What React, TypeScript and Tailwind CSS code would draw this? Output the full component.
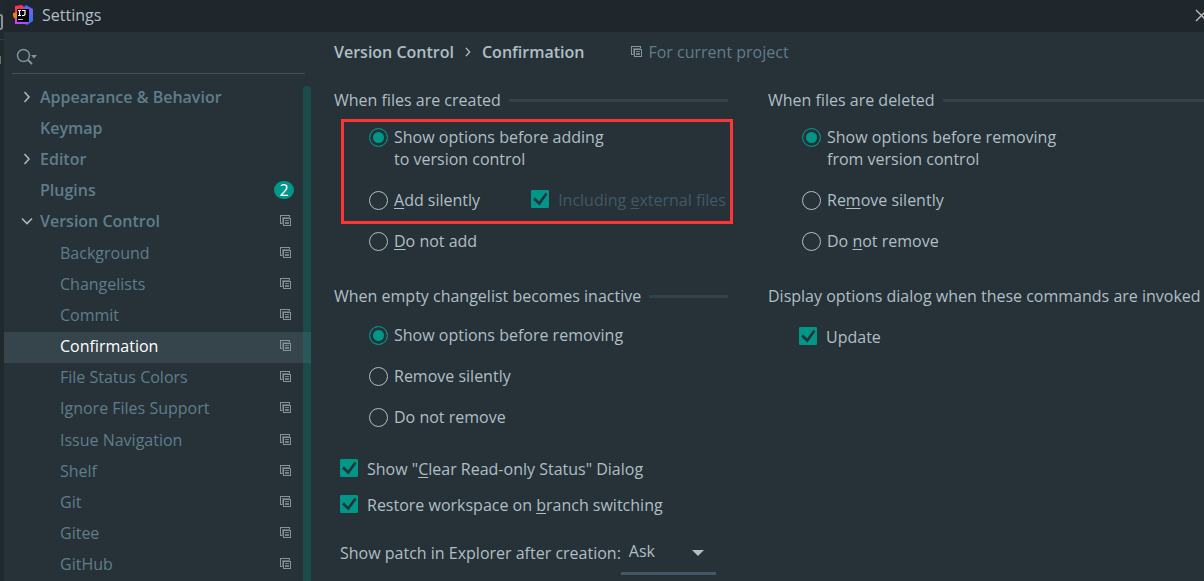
import React from 'react'

const treeItems = [
    { label: 'Appearance & Behavior', top: true, arrow: 'right' },
    { label: 'Keymap', top: true },
    { label: 'Editor', top: true, arrow: 'right' },
    { label: 'Plugins', top: true, badge: 2 },
    { label: 'Version Control', top: true, arrow: 'down', project: true },
    { label: 'Background', project: true },
    { label: 'Changelists', project: true },
    { label: 'Commit', project: true },
    { label: 'Confirmation', project: true, selected: true },
    { label: 'File Status Colors', project: true },
    { label: 'Ignore Files Support', project: true },
    { label: 'Issue Navigation', project: true },
    { label: 'Shelf', project: true },
    { label: 'Git', project: true },
    { label: 'Gitee', project: true },
    { label: 'GitHub', project: true },
]

const ProjectIcon = () => (
    <svg className="size-3 shrink-0" viewBox="0 0 12 12" fill="none" stroke="#84939c" shapeRendering="crispEdges">
        <path d="M3 8.5H.5V.5h9V3" />
        <path d="M2.5 9V2.5H10" stroke="#5b6a72" />
        <rect x="3.5" y="3.5" width="7" height="7" />
        <path d="M5 5.5h4M5 7.5h4M5 8.5h4" stroke="#74838b" />
    </svg>
)

const Arrow = ({ dir, className = 'size-3' }: { dir?: string, className?: string }) => (
    <svg className={`shrink-0 ${className}`} viewBox="0 0 12 12" fill="none" stroke="currentColor" strokeWidth="1.6">
        {dir === 'right' && <path d="M3.5 1l4.5 5-4.5 5" />}
        {dir === 'down' && <path d="M1 3.5l5 5 5-5" />}
    </svg>
)

const Logo = () => (
    <svg className="size-5 shrink-0" viewBox="0 0 20 20">
        <path d="M2 1l7-1 4 4-5 9-6 1-2-3 2-3z" fill="#fe315d" />
        <path d="M0 8l5-1 1 7-4 0-2-3z" fill="#f97a12" />
        <path d="M11 2l2-2 7 4v12l-6 4-6-4z" fill="#3b72f2" />
        <path d="M12 1l7 3 1 7-7-4z" fill="#7b5af5" />
        <path d="M2 13h6l8 4-3 2H2z" fill="#b74af7" />
        <rect x="4" y="4" width="12" height="13" fill="#080808" />
        <path d="M5 5.5h3M6.5 5.5v5M5 10.5h3M9 5.5h3v4l-1 1H9" stroke="#fff" strokeWidth="1.2" fill="none" />
        <path d="M5 14.5h5" stroke="#bbb" strokeWidth="1" />
    </svg>
)

const Radio = ({ name, checked, children }: { name: string, checked?: boolean, children: React.ReactNode }) => (
    <label className="flex items-start gap-1.5">
        <input
            type="radio"
            name={name}
            defaultChecked={checked}
            className="mt-0.5 size-[19px] shrink-0 appearance-none rounded-full border border-[#b0bec5] checked:border-[#009688] checked:bg-[#009688] checked:shadow-[inset_0_0_0_3px_#263238]"
        />
        <span>{children}</span>
    </label>
)

const Checkbox = ({ disabled, children }: { disabled?: boolean, children: React.ReactNode }) => (
    <label className={`flex items-start gap-[9px] ${disabled ? 'text-[#415967]' : ''}`}>
        <span className="grid shrink-0 pt-px">
            <input
                type="checkbox"
                defaultChecked
                disabled={disabled}
                className="peer col-start-1 row-start-1 size-[18px] appearance-none rounded-[1px] border border-[#607d8b] checked:border-[#009688] checked:bg-[#009688]"
            />
            <svg className="pointer-events-none invisible col-start-1 row-start-1 size-[18px] peer-checked:visible" viewBox="0 0 18 18" fill="none" stroke="#263238" strokeWidth="2.6">
                <path d="M3 8.5l5.3 5L15.5 3.5" />
            </svg>
        </span>
        <span>{children}</span>
    </label>
)

const Section = ({ title, children }: { title: string, children: React.ReactNode }) => (
    <section className="min-w-0">
        <div className="mb-[15px] flex items-center gap-2">
            <h2 className="whitespace-nowrap">{title}</h2>
            <div className="h-[3px] flex-1 bg-[#33424a]" />
        </div>
        {children}
    </section>
)

const Key = ({ children }: { children: React.ReactNode }) => (
    <span className="underline decoration-1 underline-offset-2">{children}</span>
)

const SideBar = () => (
    <aside className="flex w-[307px] shrink-0 flex-col">
        <div className="mr-1.5 ml-2 flex h-[42px] items-center border-b border-[#3f525c] pt-2 pl-1">
            <svg className="h-5 w-6 shrink-0" viewBox="0 0 24 20" fill="none" stroke="#84939c" strokeWidth="1.5">
                <circle cx="7.5" cy="8.5" r="6" />
                <path d="M12 13l4 4" strokeWidth="2" />
                <path d="M15 8h6l-3 3.5z" fill="#84939c" stroke="none" />
            </svg>
            <input type="text" aria-label="Search settings" className="min-w-0 flex-1 focus:outline-none" />
        </div>
        <div className="relative mt-2 flex-1">
            <ul className="grid h-full auto-rows-fr">
                {treeItems.map((item) => (
                    <li key={item.label} className="min-h-0">
                        <button
                            className={`flex h-full w-full items-center pr-[19px] pb-0.5 pl-[17px] text-left ${item.selected ? 'bg-[#36454c] text-white' : 'text-[#607d8b]'}`}
                        >
                            {item.top && <Arrow dir={item.arrow} className="mr-[7px] size-3 text-[#b0b6ba]" />}
                            <span className={`flex-1 ${item.top ? 'font-semibold' : 'pl-[39px]'}`}>{item.label}</span>
                            {item.badge && (
                                <span className="-mr-0.5 flex h-[18px] w-5 items-center justify-center rounded-full bg-[#009688] text-white">{item.badge}</span>
                            )}
                            {item.project && <ProjectIcon />}
                        </button>
                    </li>
                ))}
            </ul>
            <div className="absolute top-1 right-0 bottom-0 w-2 rounded-t-full bg-[#009688]/25" />
        </div>
    </aside>
)

const App = () => {
    return (
        <div className="flex h-screen overflow-hidden bg-[#263238] font-['Open_Sans','Noto_Sans',sans-serif] text-[16px] leading-[22px] text-[#b0bec5]">
            <div className="w-1 shrink-0 bg-[#1f292e] pt-3.5">
                <div className="h-4 w-[3px] rounded-r-full border-2 border-l-0 border-[#8a9296]" />
                <div className="mt-[9px] h-px bg-[#2f3c43]" />
                <div className="mt-4 h-2 w-px bg-[#6b7460]" />
            </div>
            <div className="flex min-w-0 flex-1 flex-col">
                <header className="flex h-8 shrink-0 items-center bg-[#1f272c] pb-0.5 pl-[9px]">
                    <Logo />
                    <h1 className="ml-[9px] flex-1">Settings</h1>
                    <button aria-label="Close" className="-mr-[5px]">
                        <svg className="size-4" viewBox="0 0 16 16" stroke="#c0c0c0" strokeWidth="1.3">
                            <path d="M3 3l11 11M14 3L3 14" />
                        </svg>
                    </button>
                </header>
                <div className="flex min-h-0 flex-1">
                    <SideBar />
                    <main className="min-w-0 flex-1 pt-[9px] pl-[23px]">
                        <div className="mb-[26px] flex items-center">
                            <a href="#" className="font-semibold">Version Control</a>
                            <Arrow dir="right" className="mx-[9px] size-2.5" />
                            <span className="font-semibold">Confirmation</span>
                            <span className="ml-[47px] flex items-center gap-[5px] text-[#607d8b]">
                                <ProjectIcon />
                                For current project
                            </span>
                        </div>
                        <div className="grid grid-cols-[394fr_436fr] gap-x-10 gap-y-[33px]">
                            <Section title="When files are created">
                                <div className="flex flex-col gap-[19px]">
                                    <div className="relative flex flex-col gap-[19px] pl-[35px]">
                                        <Radio name="created" checked>
                                            Show options before adding<br />to version control
                                        </Radio>
                                        <div className="flex gap-[51px] whitespace-nowrap">
                                            <Radio name="created"><Key>A</Key>dd silently</Radio>
                                            <Checkbox disabled>Including <Key>e</Key>xternal files</Checkbox>
                                        </div>
                                        <div className="pointer-events-none absolute -top-[7px] -right-[5px] -bottom-[13px] left-[7px] border-3 border-[#ff3535]" />
                                    </div>
                                    <div className="pl-[35px]">
                                        <Radio name="created"><Key>D</Key>o not add</Radio>
                                    </div>
                                </div>
                            </Section>
                            <Section title="When files are deleted">
                                <div className="flex flex-col gap-[19px] pl-[34px]">
                                    <Radio name="deleted" checked>
                                        Show options before removing<br />from version control
                                    </Radio>
                                    <Radio name="deleted">Re<Key>m</Key>ove silently</Radio>
                                    <Radio name="deleted">Do <Key>n</Key>ot remove</Radio>
                                </div>
                            </Section>
                            <Section title="When empty changelist becomes inactive">
                                <div className="flex flex-col gap-[19px] pt-0.5 pl-[35px]">
                                    <Radio name="inactive" checked>Show options before removing</Radio>
                                    <Radio name="inactive">Remove silently</Radio>
                                    <Radio name="inactive">Do not remove</Radio>
                                </div>
                            </Section>
                            <Section title="Display options dialog when these commands are invoked">
                                <div className="pt-1 pl-[31px]">
                                    <Checkbox>Update</Checkbox>
                                </div>
                            </Section>
                        </div>
                        <div className="mt-[30px] flex flex-col gap-3.5 pl-1.5">
                            <Checkbox>Show "<Key>C</Key>lear Read-only Status" Dialog</Checkbox>
                            <Checkbox>Restore workspace on <Key>b</Key>ranch switching</Checkbox>
                            <div className="flex items-center">
                                <label htmlFor="patch">Show patch in Explorer after creation:</label>
                                <div className="relative">
                                    <select id="patch" className="h-[45px] w-[95px] appearance-none border-b-3 border-[#415967] pl-2 focus:outline-none">
                                        <option>Ask</option>
                                        <option>Yes</option>
                                        <option>No</option>
                                    </select>
                                    <svg className="pointer-events-none absolute top-5 right-3 h-1.5 w-3" viewBox="0 0 12 6" fill="#b0bec5">
                                        <path d="M0 0h12L6 6z" />
                                    </svg>
                                </div>
                            </div>
                        </div>
                    </main>
                </div>
            </div>
        </div>
    )
}

export default App
